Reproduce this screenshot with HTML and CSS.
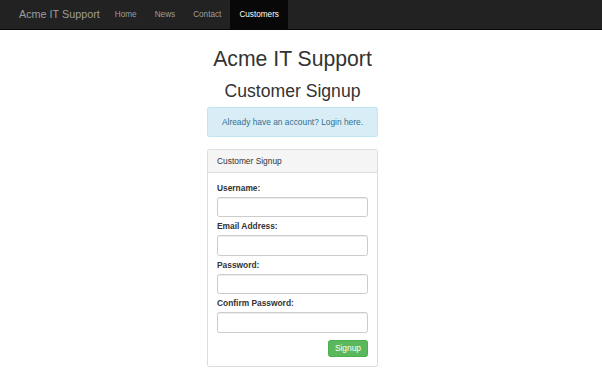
FILE: index.html
```html
<!DOCTYPE html>
<html lang="en">
<head>
<meta charset="utf-8">
<title>Acme IT Support - Customer Signup</title>
<link rel="stylesheet" href="styles.css">
</head>
<body>
<nav class="navbar">
  <a class="brand" href="#">Acme IT Support</a>
  <ul class="nav">
    <li><a href="#">Home</a></li>
    <li><a href="#">News</a></li>
    <li><a href="#">Contact</a></li>
    <li class="active"><a href="#">Customers</a></li>
  </ul>
</nav>
<div class="page">
  <main class="container">
    <h1 class="title">Acme IT Support</h1>
    <h2 class="subtitle">Customer Signup</h2>
    <div class="alert">Already have an account? <a href="#">Login here.</a></div>
    <section class="panel">
      <div class="panel-heading">Customer Signup</div>
      <form class="panel-body">
        <div class="form-group">
          <label for="username">Username:</label>
          <input id="username" type="text" class="form-control">
        </div>
        <div class="form-group">
          <label for="email">Email Address:</label>
          <input id="email" type="email" class="form-control">
        </div>
        <div class="form-group">
          <label for="password">Password:</label>
          <input id="password" type="password" class="form-control">
        </div>
        <div class="form-group">
          <label for="confirm">Confirm Password:</label>
          <input id="confirm" type="password" class="form-control">
        </div>
        <div class="actions">
          <button type="button" class="btn">Signup</button>
        </div>
      </form>
    </section>
  </main>
</div>
</body>
</html>
```
FILE: styles.css
```css
* { box-sizing: border-box; }
html, body { margin: 0; padding: 0; background: #fff; }
body {
  font-family: "Liberation Sans", Arial, Helvetica, sans-serif;
  font-size: 8.4px;
  line-height: 12px;
  color: #333;
}
a { text-decoration: none; }

.navbar {
  display: flex;
  align-items: center;
  height: 30px;
  background: #222;
  border-bottom: 1px solid #080808;
  padding-left: 10px;
}
.brand {
  color: #9d9d9d;
  font-size: 10.8px;
  padding: 0 6px 0 9px;
  line-height: 29px;
}
.nav {
  display: flex;
  list-style: none;
  margin: 0;
  padding: 0;
  height: 29px;
}
.nav li a {
  display: block;
  color: #9d9d9d;
  font-size: 8.2px;
  padding: 0 9px;
  line-height: 29px;
  height: 29px;
}
.nav li.active a {
  color: #fff;
  background: #080808;
}

.page { padding-right: 17px; }
.container {
  width: 171px;
  margin: 0 auto;
}
.title {
  margin: 17px 0 0;
  font-size: 21.2px;
  line-height: 24px;
  font-weight: normal;
  text-align: center;
  color: #333;
}
.subtitle {
  margin: 10px 0 0;
  font-size: 17.6px;
  line-height: 20px;
  font-weight: normal;
  text-align: center;
  color: #333;
}
.alert {
  margin-top: 6px;
  height: 30px;
  padding: 8px 9px;
  background: #d9edf7;
  border: 1px solid #bce8f1;
  border-radius: 2.4px;
  color: #31708f;
  text-align: center;
}
.alert a { color: #31708f; }

.panel {
  margin-top: 12px;
  border: 1px solid #ddd;
  border-radius: 2.4px;
  background: #fff;
  box-shadow: 0 1px 1px rgba(0,0,0,.05);
}
.panel-heading {
  background: #f5f5f5;
  border-bottom: 1px solid #ddd;
  padding: 5px 9px;
  color: #333;
}
.panel-body {
  display: flex;
  flex-direction: column;
  padding: 9px;
  margin: 0;
}
.form-group {
  display: flex;
  flex-direction: column;
  margin-bottom: 3px;
}
.form-group label {
  font-weight: bold;
  margin-bottom: 3px;
}
.form-control {
  height: 20.4px;
  width: 100%;
  border: 1px solid #ccc;
  border-radius: 2.4px;
  box-shadow: inset 0 1px 1px rgba(0,0,0,.075);
  padding: 3px 7px;
  font: inherit;
  margin: 0;
  background: #fff;
}
.actions {
  display: flex;
  justify-content: flex-end;
  margin-top: 4px;
}
.btn {
  height: 17px;
  padding: 0 6px;
  font-family: inherit;
  font-size: 8.4px;
  line-height: 15px;
  color: #fff;
  background: #5cb85c;
  border: 1px solid #4cae4c;
  border-radius: 2.4px;
  cursor: pointer;
}
```
